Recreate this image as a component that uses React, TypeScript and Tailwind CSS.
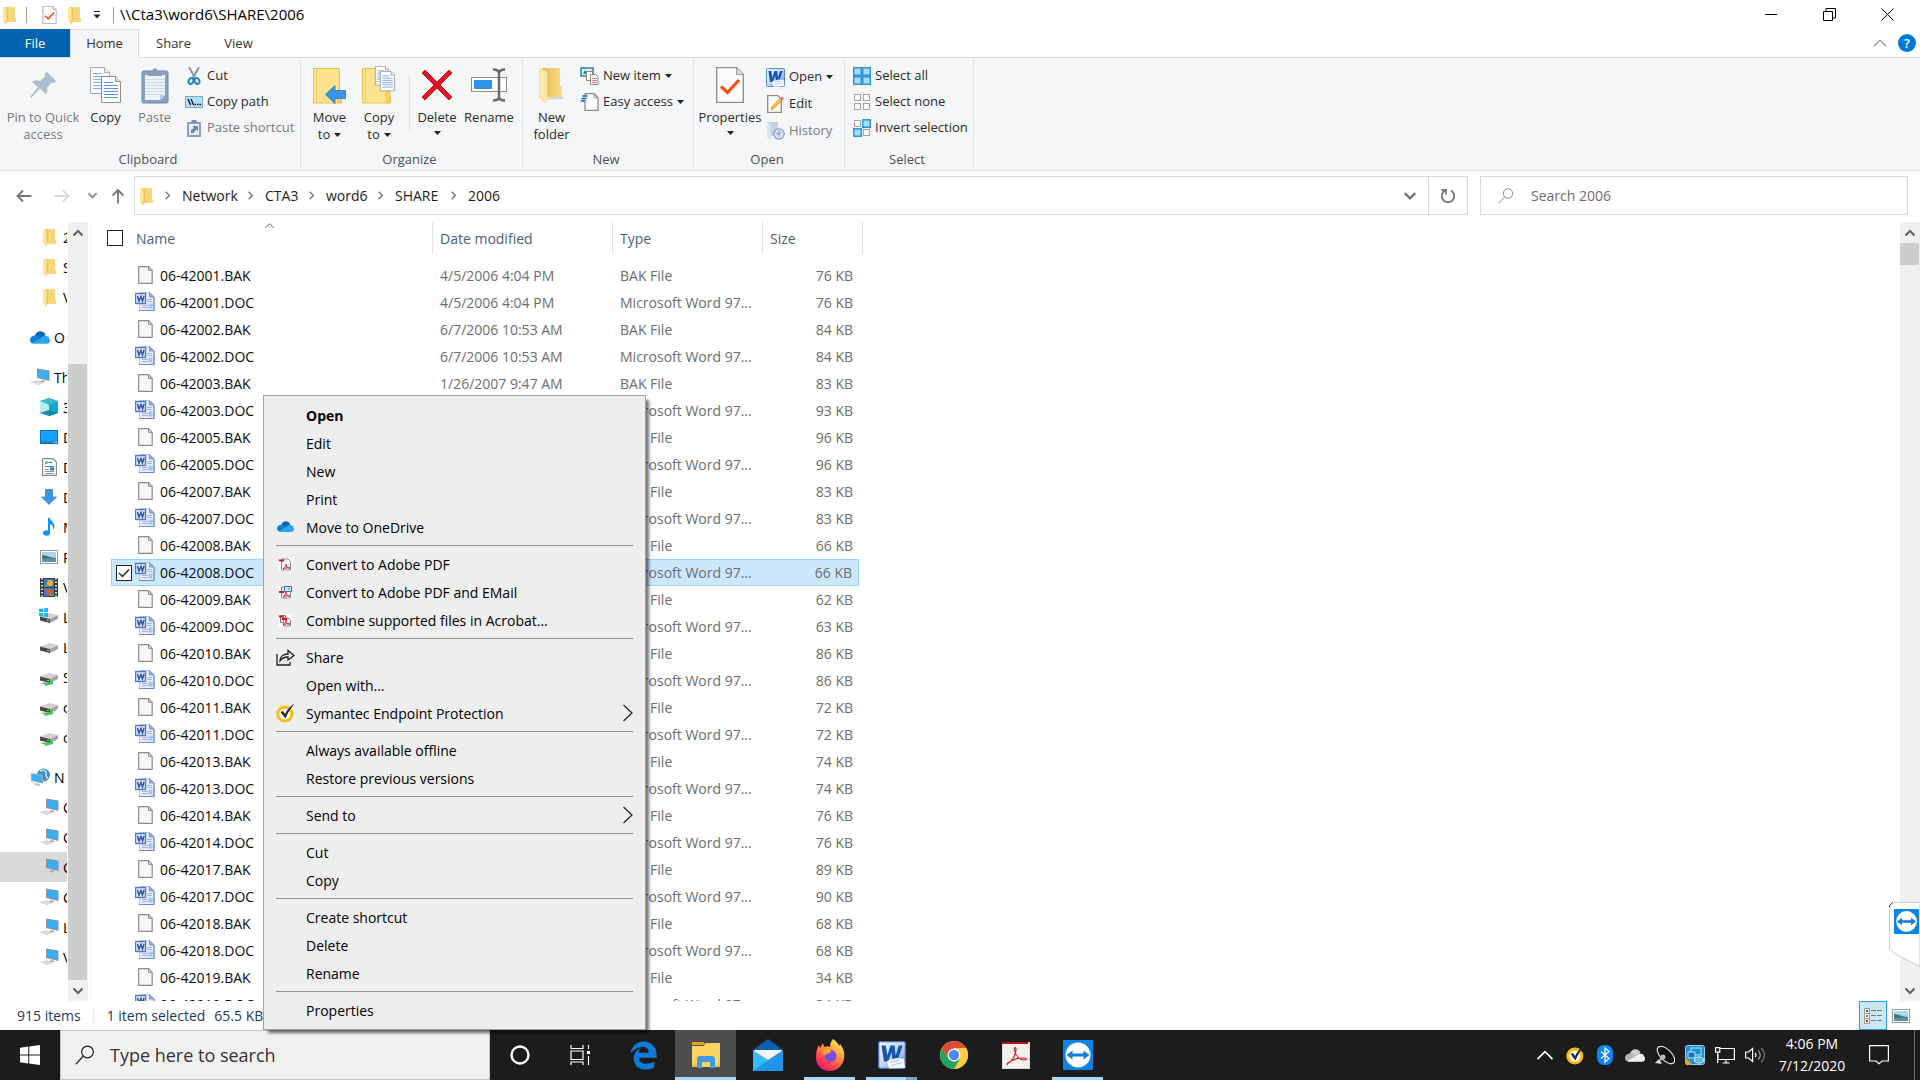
import React from "react";
import { FaEdgeLegacy } from "react-icons/fa";

/* ---------- small drawing helpers ---------- */

const Chevron = ({ dir, size = 12, color = "#606060", width = 2 }: { dir: "up" | "down" | "right"; size?: number; color?: string; width?: number }) => {
  const d = { up: "M1.5 8.5 6 4l4.500 4.500", down: "M1.500 3.500 6 8l4.500-4.500", right: "M4 2l4 4-4 4" }[dir];
  return (
    <svg width={size} height={size} viewBox="0 0 12 12" fill="none" stroke={color} strokeWidth={width} className="shrink-0">
      <path d={d} />
    </svg>
  );
};

const Caret = () => (
  <svg width="7" height="4" viewBox="0 0 7 4" className="shrink-0">
    <path d="M0 0h7L3.500 4z" fill="#222" />
  </svg>
);

const Folder = () => (
  <svg width="13" height="18" viewBox="0 0 13 18" className="shrink-0">
    <path d="M2 1h10v11l1 1v3H2z" fill="#f2cb62" />
    <path d="M5 1h7v11l1 1v3H5z" fill="#f9d678" />
    <path d="M0 1l4 2v12l-1 3-3-2z" fill="#ffe59a" />
    <path d="M4 3v12l-1 3" fill="none" stroke="#e4b94a" strokeWidth=".7" />
  </svg>
);

const BigFolder = () => (
  <svg width="26" height="36" viewBox="0 0 26 36">
    <defs>
      <linearGradient id="bf" x1="0" x2="1"><stop offset="0" stopColor="#e3bd58" /><stop offset="1" stopColor="#fcdd84" /></linearGradient>
    </defs>
    <path d="M4 33l20-1 2-2H10z" fill="#d9d9d9" />
    <path d="M3 1h18v17l2 2v10H3z" fill="url(#bf)" />
    <path d="M0 1l8 4v26l-1 5-7-5z" fill="#ffe9a9" stroke="#efd07a" strokeWidth=".5" />
  </svg>
);

const SheetLines = ({ x, y }: { x: number; y: number }) => (
  <g transform={`translate(${x} ${y})`}>
    <path d="M.5.5h14l5 5v21H.5z" fill="#fff" stroke="#8f8f8f" />
    <path d="M14.500.5v5h5" fill="#e9e9e9" stroke="#8f8f8f" />
    <path d="M3 6.500h9M3 9.500h14M3 12.500h14M3 15.500h14M3 18.500h14M3 21.500h14" stroke="#5f97ea" />
  </g>
);

const CopyIcon = () => (
  <svg width="32" height="37" viewBox="0 0 32 37">
    <g opacity=".75"><SheetLines x={0} y={0} /></g>
    <SheetLines x={11} y={9} />
  </svg>
);

const PinIcon = () => (
  <svg width="28" height="28" viewBox="0 0 28 28">
    <path d="M18 1l9 9-2 2-2-.5-5 5c1 3 0 5-1 7l-6-6L2 27l-1-1 8-10-6-5c2-2 5-2 8-1l5-5-.5-2z" fill="#aebccf" />
  </svg>
);

const PasteIcon = () => (
  <svg width="28" height="37" viewBox="0 0 28 37">
    <rect x="1" y="4" width="26" height="32" rx="1.500" fill="#8ba0c4" stroke="#7085ab" />
    <path d="M4 8h20v20l-5 5H4z" fill="#eef2f9" />
    <path d="M4 12.500h20M4 15.500h20M4 18.500h20M4 21.500h20M4 24.500h20M4 27.500h18" stroke="#d0d9e8" />
    <path d="M24 28h-5v5z" fill="#bccbe3" />
    <path d="M7 9V6l4-1c0-5 6-5 6 0l4 1v3z" fill="#8d9db8" />
  </svg>
);

const CutIcon = () => (
  <svg width="18" height="18" viewBox="0 0 18 18" fill="none">
    <path d="M4 0l6 11M14 0L8 11" stroke="#8e979e" strokeWidth="2" />
    <ellipse cx="6" cy="14" rx="2.300" ry="3" stroke="#1f86bf" strokeWidth="2" transform="rotate(25 6 14)" />
    <ellipse cx="12" cy="14" rx="2.300" ry="3" stroke="#1f86bf" strokeWidth="2" transform="rotate(-25 12 14)" />
  </svg>
);

const CopyPathIcon = () => (
  <svg width="18" height="12" viewBox="0 0 18 12">
    <rect x=".5" y=".5" width="17" height="11" fill="#b5defb" stroke="#7fa9c6" />
    <path d="M3 3l2.500 6M6 3l2.500 6" stroke="#111" strokeWidth="1.300" />
    <path d="M9.500 8.500h1.500M12 8.500h1.500M14.500 8.500H16" stroke="#111" strokeWidth="1.500" />
  </svg>
);

const PasteShortcutIcon = () => (
  <svg width="16" height="18" viewBox="0 0 16 18">
    <rect x="1" y="3" width="14" height="15" fill="#8da2c7" />
    <path d="M5 3l1-2h4l1 2v1H5z" fill="#7a8fb5" />
    <rect x="3" y="5" width="10" height="11" fill="#e9eef6" />
    <path d="M5 14V11l3-2-1.500-2H12v5l-1.500-1.500L7 14z" fill="#7084a8" />
  </svg>
);

const FlatFolder = () => (
  <>
    <path d="M.5 2.500h26V30l2 1v6H.5z" fill="#fde38e" stroke="#e8bf4b" />
    <path d="M3.500 3v34" stroke="#f2cd66" />
    <path d="M24 27c0-3 4-3 4-1v10h-3z" fill="#fbd567" stroke="#e8bf4b" />
  </>
);

const MoveToIcon = () => (
  <svg width="33" height="38" viewBox="0 0 33 38">
    <FlatFolder />
    <path d="M12.500 28.500L22 19.500v5h10.500v8H22v5z" fill="#3a96e4" stroke="#2778c0" strokeWidth=".8" />
  </svg>
);

const CopyToIcon = () => (
  <svg width="34" height="38" viewBox="0 0 34 38">
    <FlatFolder />
    <g transform="translate(13 0) scale(.72)"><SheetLines x={0} y={0} /></g>
    <g transform="translate(18 5) scale(.75)"><SheetLines x={0} y={0} /></g>
  </svg>
);

const DeleteIcon = () => (
  <svg width="32" height="32" viewBox="0 0 32 32">
    <path d="M1 4l3-3 12 12L28 1l3 3-12 12 12 12-3 3-12-12L4 31l-3-3 12-12z" fill="#e81123" stroke="#a80d1a" strokeWidth=".8" />
  </svg>
);

const RenameIcon = () => (
  <svg width="37" height="34" viewBox="0 0 37 34" fill="none">
    <rect x=".5" y="9.500" width="35" height="14" fill="#fff" stroke="#8c8c8c" />
    <rect x="3" y="12" width="18" height="9" fill="#2f93e8" />
    <path d="M22 1.500c4 0 6 1 6 4v23c0 3-2 4-6 4M34 1.500c-4 0-6 1-6 4v23c0 3 2 4 6 4" stroke="#6b6b6b" strokeWidth="2.500" />
  </svg>
);

const NewItemIcon = () => (
  <svg width="19" height="18" viewBox="0 0 19 18">
    <rect x="1" y="1" width="12" height="8" fill="#d9f0fb" stroke="#2d7fae" strokeWidth="1.500" />
    <path d="M3 7l2-4 3 4z" fill="#3a8a5d" />
    <path d="M6.500 4.500h6v9h-6z" fill="#fff" stroke="#888" />
    <path d="M10.500 7.500h5l2.500 2.500v7.500h-7.500z" fill="#fff" stroke="#888" />
    <path d="M12 11.500h5M12 13.500h5M12 15.500h5" stroke="#d7837e" />
  </svg>
);

const EasyAccessIcon = () => (
  <svg width="18" height="18" viewBox="0 0 18 18">
    <path d="M4 .7h9l4 4v12.600H4z" fill="#fff" stroke="#8a8a8a" strokeWidth="1.300" />
    <path d="M13 .7v4h4" fill="none" stroke="#8a8a8a" />
    <rect x="0" y="2" width="4.700" height="7" fill="#f5f6f7" />
    <path d="M1.500 3h5M.5 5.500h5M0 8h4.500" stroke="#12609e" strokeWidth="1.400" />
  </svg>
);

const PropertiesIcon = ({ w = 28, h = 36 }: { w?: number; h?: number }) => (
  <svg width={w} height={h} viewBox="0 0 28 36">
    <path d="M.7.7h20l6.600 6.600v28H.7z" fill="#fcfcfc" stroke="#8a8a8a" strokeWidth="1.300" />
    <path d="M20.700.7v6.600h6.600" fill="#e6e6e6" stroke="#8a8a8a" />
    <path d="M5 19.500l6.500 6L23 13" fill="none" stroke="#f2500f" strokeWidth="3.200" />
  </svg>
);

const WordIcon = ({ size = 19 }: { size?: number }) => (
  <svg width={size} height={size} viewBox="0 0 28 28">
    <defs>
      <linearGradient id="wd" x1="0" x2="1" y2="1"><stop offset="0" stopColor="#f3f8fe" /><stop offset=".5" stopColor="#c4d9f5" /><stop offset="1" stopColor="#5f8dd3" /></linearGradient>
    </defs>
    <rect x=".7" y=".7" width="26.600" height="26.600" rx="1.500" fill="url(#wd)" stroke="#4272bd" strokeWidth="1.200" />
    <path d="M3.500 4.500h4.300l1.500 10L12.500 4.500h4l1.200 10 3-10h4L19 20.500h-4.200l-1.300-9-3.300 9H6z" fill="#1655b0" />
    <path d="M9 20l9-3 8 1 1 9-16 .5z" fill="#fff" opacity=".92" />
    <path d="M12 21.500l10-2.500M13 24.500l11-3" stroke="#a9c4ea" />
  </svg>
);

const EditIcon = () => (
  <svg width="17" height="18" viewBox="0 0 17 18">
    <path d="M.7.7h10l3.600 3.600v13H.7z" fill="#fff" stroke="#8a8a8a" strokeWidth="1.300" />
    <path d="M4 15l1-3.500L13.500 3l2 2L7 13.500z" fill="#f6b92f" stroke="#c98a12" strokeWidth=".6" />
    <path d="M13 3.500L15 1.500l2 2-2 2z" fill="#e06b7c" />
  </svg>
);

const HistoryIcon = () => (
  <svg width="18" height="18" viewBox="0 0 18 18">
    <path d="M0 0h11v14H4l-1 3-3-2z" fill="#c4d0e4" />
    <path d="M0 0l4 2v12l-1 3-3-2z" fill="#dbe3f0" />
    <circle cx="12" cy="12" r="5.200" fill="#dde5f1" stroke="#8ba0c2" strokeWidth="1.300" />
    <path d="M12 8.500V12l2.500-2M9 12h3v3" fill="none" stroke="#7c90b3" />
  </svg>
);

const SelectIcon = ({ on }: { on: boolean[] }) => (
  <svg width="18" height="18" viewBox="0 0 18 18">
    {on.map((v, i) => {
      const x = i % 2 ? 10 : 1;
      const y = i > 1 ? 10 : 1;
      return v ? (
        <rect key={i} x={x - 0.2} y={y - 0.2} width="7.500" height="7.500" fill="#a6dbfb" stroke="#2c93e0" strokeWidth="1.500" />
      ) : (
        <rect key={i} x={x + 0.5} y={y + 0.5} width="6" height="6" fill="#fcfcfc" stroke="#a5a5a5" />
      );
    })}
  </svg>
);

const BakIcon = () => (
  <svg width="15" height="18" viewBox="0 0 15 18" className="shrink-0">
    <path d="M.7.7h9.800l3.700 3.700v12.900H.7z" fill="#f8f8f8" stroke="#8b8b8b" strokeWidth="1.200" />
    <path d="M10.500.7v3.700h3.700" fill="none" stroke="#8b8b8b" />
  </svg>
);

const DocIcon = () => (
  <svg width="20" height="20" viewBox="0 0 20 20" className="shrink-0">
    <path d="M4.500.5h10l4.500 4v14H4.500z" fill="#e6eefc" stroke="#b4c6e8" />
    <path d="M4 18.500h15V5" fill="none" stroke="#6d8dc8" strokeWidth="1.200" />
    <path d="M14.500.5v4.500H19z" fill="#8fabdd" stroke="#7d9bd0" />
    <path d="M12 7.500h5M12 9.500h5M7 13.500h6M7 15.500h6" stroke="#9fb7e3" />
    <rect x="13.500" y="11.500" width="4" height="5" fill="#a9c4ef" />
    <rect x=".5" y="1.500" width="10" height="10" fill="#dbe6fa" stroke="#5579c4" strokeWidth="1.400" />
    <path d="M2.500 4l1.500 5L6 4.500 7.500 9l1.500-5" fill="none" stroke="#2f55a8" strokeWidth="1.500" />
  </svg>
);

const CloudIcon = ({ w = 20, grey = false }: { w?: number; grey?: boolean }) => (
  <svg width={w} height={(w * 13) / 20} viewBox="0 0 20 13" className="shrink-0">
    <path d="M5 5C6-1 14-1 15.500 4L9 9z" fill={grey ? "#cfcfcf" : "#0a64b8"} />
    <path d="M3.500 12.500C-1.500 12-1 5 4.500 4.500c2-.5 4 .5 5 1.500L14 9z" fill={grey ? "#b5b5b5" : "#1280d8"} />
    <path d="M2.500 12L12 6.500c2-3 7-2 7.500 1.500 1.200 2 0 4.800-2.500 4.800H4z" fill={grey ? "#f2f2f2" : "#28a8ea"} />
  </svg>
);

const PcIcon = () => (
  <svg width="20" height="18" viewBox="0 0 20 18" className="shrink-0">
    <path d="M7 .5l12.500 2V13L7 10z" fill="#8b959e" />
    <path d="M8 1.700l10.700 1.600v8.200L8 9z" fill="#36aef5" />
    <path d="M12 12l3 .7v1.500l-5-.5z" fill="#a4aab0" />
    <path d="M0 14l8-1.500 6 2.500-6 2z" fill="#c3c9ce" />
    <path d="M2 14.300l8 1.700M5 13.500l7 1.800" stroke="#eff1f3" strokeWidth=".7" />
  </svg>
);

const CubeIcon = () => (
  <svg width="18" height="18" viewBox="0 0 18 18">
    <path d="M9 0l9 3v12l-9 3-9-3V3z" fill="#5fd0da" />
    <path d="M9 0l9 3-9 4-9-4z" fill="#37b8c8" />
    <path d="M9 7v11l9-3V3z" fill="#12a9cc" />
    <path d="M9 7v5l-9 3V3z" fill="#b9eef0" />
    <path d="M9 12l9 3-9 3-9-3z" fill="#0c7f97" opacity=".8" />
  </svg>
);
const DesktopIcon = () => (
  <svg width="18" height="14" viewBox="0 0 18 14"><rect x=".5" y=".5" width="17" height="13" fill="#18a0fb" stroke="#0a6fb8" /><path d="M1 12h13" stroke="#0a6fb8" /><path d="M14 12.500h3" stroke="#fff" strokeDasharray="1 1" /></svg>
);
const DocumentsIcon = () => (
  <svg width="15" height="18" viewBox="0 0 15 18"><path d="M.6.6h10.400l3.400 3.400v13.400H.6z" fill="#fff" stroke="#8b8b8b" strokeWidth="1.200" /><path d="M3 6.500L5 3v3M6.500 4.500h4M3 8.500h9" stroke="#1e8bd0" fill="none" /><path d="M3 11.500h4M3 13.500h9M3 15.500h9" stroke="#999" /><rect x="8" y="9.500" width="4" height="3" fill="#2f7fb8" /></svg>
);
const DownloadIcon = () => (
  <svg width="16" height="16" viewBox="0 0 16 16"><path d="M4.500.5h7V8h4L8 15.500.5 8h4z" fill="#3c97e6" stroke="#2a79c0" strokeWidth=".7" /></svg>
);
const MusicIcon = () => (
  <svg width="12" height="18" viewBox="0 0 12 18"><ellipse cx="3.500" cy="15" rx="3.500" ry="2.800" fill="#0e97f5" /><path d="M5 0h2c0 3 5 4 4.500 9-.3 1-.6 1.500-1.500 2 .5-3-1-4.500-3-5v9H5z" fill="#0e97f5" /></svg>
);
const PictureIcon = () => (
  <svg width="18" height="14" viewBox="0 0 18 14">
    <rect x=".5" y=".5" width="17" height="13" fill="#fff" stroke="#999" />
    <rect x="2" y="2" width="14" height="10" fill="#a9d6f5" />
    <path d="M2 5c5 0 8 3 14 3v1H2z" fill="#3f7a55" /><path d="M2 8.500h14V12H2z" fill="#5d8fae" />
  </svg>
);
const VideoIcon = () => (
  <svg width="18" height="19" viewBox="0 0 18 19">
    <rect width="18" height="19" fill="#3a3a3a" /><path d="M2 0v19M16 0v19" stroke="#ddd" strokeWidth="2" strokeDasharray="1.500 2" />
    <rect x="4" y="1" width="10" height="8" fill="#3c78d8" /><rect x="4" y="10" width="10" height="8" fill="#3c78d8" />
    <circle cx="10" cy="5" r="3" fill="#e7b32f" /><circle cx="9" cy="13.500" r="3" fill="#dd5a2b" /><path d="M4 7h5v2H4zM9 16h5v2H9z" fill="#5fa055" />
  </svg>
);
const DriveIcon = ({ kind = "plain" }: { kind?: "plain" | "win" | "net" }) => (
  <svg width="20" height="18" viewBox="0 0 20 18">
    <path d="M1 8.500L10 5l9 2-8 4z" fill="#d2d2d2" />
    <path d="M1 8.500l10 2.500v4L1 12.500z" fill="#4a4a4a" />
    <path d="M11 11l8-4v4l-8 4z" fill="#a3a3a3" />
    <path d="M8 12.500h2" stroke="#6fe06f" />
    {kind === "win" && <path d="M0 1l4-.5V4H0zM5 .3L9 0v4H5zM0 5h4v3.500L0 8zM5 5h4v4l-4-.4z" fill="#12b6ee" />}
    {kind === "net" && <path d="M1 15l10-1v-2l3 1v3l-8 2v-1.500z" fill="#46c15c" />}
  </svg>
);
const NetworkIcon = () => (
  <svg width="19" height="19" viewBox="0 0 19 19">
    <circle cx="12.500" cy="7" r="6.500" fill="#3f8fc0" /><path d="M9 3c4-2 7 0 6 3s2 3 2 5" stroke="#bfe2f5" fill="none" strokeWidth="1.500" />
    <path d="M0 5l12 2v8.500L0 13z" fill="#9ab" /><path d="M1 6.200l10 1.700v6.300L1 12z" fill="#36aef5" /><path d="M4 15l6 1.500-2 1.500-5-1.500z" fill="#b5bac0" />
  </svg>
);

const PdfIcon = ({ kind }: { kind: "one" | "mail" | "many" }) => (
  <svg width="13" height="13" viewBox="0 0 13 13">
    <rect width="13" height="13" fill="#fff" />
    {kind === "many" && <path d="M1.500 1.500h5v7h-5z" fill="#eee" stroke="#777" />}
    <path d={kind === "many" ? "M4.500 4h4.500l2.500 2v6h-7z" : "M2.500 1h6.500l2.500 2.500v8.500h-9z"} fill="#f8f8f8" stroke="#888" />
    <path d="M4 11c2-1 3-3.500 3-5 0 2.500 1.500 4.500 4 4-2.500-.5-5 0-7 1z" fill="none" stroke="#e0202b" />
    <rect x="0" y={kind === "mail" ? 5 : 1.5} width="5" height="2" fill="#e60f1c" />
    {kind === "mail" && <path d="M5.500.5h7v5h-7z M8 2.500l1 1 2-1" fill="#e9f3fc" stroke="#2f6fb5" />}
    {kind === "many" && <rect x="3" y="4" width="5" height="2" fill="#e60f1c" />}
  </svg>
);

const ShareIcon = () => (
  <svg width="19" height="17" viewBox="0 0 19 17" fill="none" stroke="#222" strokeWidth="1.300">
    <path d="M1 5v11h13v-3" /><path d="M4 12c0-4 3-7 8-7V1.500L18 6.500 12 11V8C8 8 6 9 4 12z" />
  </svg>
);

const SymantecIcon = () => (
  <svg width="19" height="20" viewBox="0 0 19 20">
    <circle cx="8.800" cy="11" r="7" fill="#fff" stroke="#fdbb13" strokeWidth="3" />
    <path d="M4.500 9l2.500-1 2 3C11 7 14 3 18.500.5 15 5 11.500 10 9.500 15.500z" fill="#26282a" />
  </svg>
);

const TeamViewerIcon = ({ size }: { size: number }) => (
  <svg width={size} height={size} viewBox="0 0 30 30">
    <rect width="30" height="30" rx="1" fill="#0d83e6" />
    <circle cx="15" cy="15" r="12.500" fill="#fff" />
    <path d="M3.500 15l6-4.500v3h11v-3l6 4.500-6 4.500v-3h-11v3z" fill="#0f7fdf" />
  </svg>
);

const SearchGlyph = ({ size, color }: { size: number; color: string }) => (
  <svg width={size} height={size} viewBox="0 0 16 16" fill="none" stroke={color} className="shrink-0">
    <circle cx="10" cy="5.500" r="4.700" /><path d="M6.500 9L.7 15.300" />
  </svg>
);

/* ---------- ribbon ---------- */

const BigButton = ({ icon, lines, width, disabled, caret }: { icon: React.ReactNode; lines: string[]; width: string; disabled?: boolean; caret?: "inline" | "below" }) => (
  <button className={`flex flex-col items-center text-center text-[13px] leading-[17px] ${width} ${disabled ? "text-[#7a7a7a]" : "text-[#2b2b2b]"}`}>
    <span className="mb-0.5 flex h-[44px] items-center justify-center">{icon}</span>
    {lines.map((l, i) => (
      <span key={l} className="flex items-center gap-1 whitespace-nowrap">
        {l}
        {caret === "inline" && i === lines.length - 1 && <Caret />}
      </span>
    ))}
    {caret === "below" && <span className="flex h-[13px] items-center"><Caret /></span>}
  </button>
);

const SmallButton = ({ icon, label, disabled, caret }: { icon: React.ReactNode; label: string; disabled?: boolean; caret?: boolean }) => (
  <button className={`flex h-[26px] items-center gap-1 text-[13px] whitespace-nowrap ${disabled ? "text-[#7a7a7a]" : "text-[#2b2b2b]"}`}>
    <span className="flex w-[19px] items-center justify-center">{icon}</span>
    {label}
    {caret && <Caret />}
  </button>
);

const Group = ({ title, width, children }: { title: string; width: string; children: React.ReactNode }) => (
  <section aria-label={title} className={`my-0.5 flex flex-col border-r border-[#e0e1e3] ${width}`}>
    <div className="flex flex-1 pt-[3px]">{children}</div>
    <div className="h-[18px] pr-1 text-center text-[13px] leading-[18px] text-[#505050]">{title}</div>
  </section>
);

const Ribbon = () => (
  <div className="flex h-[114px] shrink-0 border-y border-[#dadbdc] bg-[#f5f6f7]">
    <Group title="Clipboard" width="w-[301px]">
      <BigButton icon={<PinIcon />} lines={["Pin to Quick", "access"]} width="w-[86px]" disabled />
      <BigButton icon={<CopyIcon />} lines={["Copy"]} width="w-[39px]" />
      <BigButton icon={<PasteIcon />} lines={["Paste"]} width="w-[59px]" disabled />
      <div className="flex flex-col">
        <SmallButton icon={<CutIcon />} label="Cut" />
        <SmallButton icon={<CopyPathIcon />} label="Copy path" />
        <SmallButton icon={<PasteShortcutIcon />} label="Paste shortcut" disabled />
      </div>
    </Group>
    <Group title="Organize" width="w-[222px]">
      <BigButton icon={<MoveToIcon />} lines={["Move", "to"]} width="w-[57px]" caret="inline" />
      <BigButton icon={<CopyToIcon />} lines={["Copy", "to"]} width="w-[42px]" caret="inline" />
      <div className="mt-3 ml-[9px] h-[56px] w-px bg-[#dfe0e2]" />
      <BigButton icon={<DeleteIcon />} lines={["Delete"]} width="w-[54px]" caret="below" />
      <BigButton icon={<RenameIcon />} lines={["Rename"]} width="w-[50px]" />
    </Group>
    <Group title="New" width="w-[171px]">
      <BigButton icon={<BigFolder />} lines={["New", "folder"]} width="w-[57px]" />
      <div className="flex flex-col">
        <SmallButton icon={<NewItemIcon />} label="New item" caret />
        <SmallButton icon={<EasyAccessIcon />} label="Easy access" caret />
      </div>
    </Group>
    <Group title="Open" width="w-[151px]">
      <BigButton icon={<PropertiesIcon />} lines={["Properties"]} width="w-[72px]" caret="below" />
      <div className="flex flex-col gap-px pt-px">
        <SmallButton icon={<WordIcon />} label="Open" caret />
        <SmallButton icon={<EditIcon />} label="Edit" />
        <SmallButton icon={<HistoryIcon />} label="History" disabled />
      </div>
    </Group>
    <Group title="Select" width="w-[129px]">
      <div className="flex flex-col pl-[7px]">
        <SmallButton icon={<SelectIcon on={[true, true, true, true]} />} label="Select all" />
        <SmallButton icon={<SelectIcon on={[false, false, false, false]} />} label="Select none" />
        <SmallButton icon={<SelectIcon on={[false, true, true, false]} />} label="Invert selection" />
      </div>
    </Group>
  </div>
);

/* ---------- title, tabs, address ---------- */

const TitleBar = () => (
  <header className="flex h-[29px] shrink-0 items-center">
    <div className="flex flex-1 items-center">
      <span className="ml-[3px]"><Folder /></span>
      <span className="ml-2.5 h-4 w-px bg-[#9a9a9a]" />
      <button aria-label="Properties" className="ml-[15px]"><PropertiesIcon w={15} h={18} /></button>
      <button aria-label="New folder" className="ml-[11px]"><Folder /></button>
      <button aria-label="Customize Quick Access Toolbar" className="ml-3">
        <svg width="8" height="8" viewBox="0 0 8 8"><path d="M1 .5h6" stroke="#222" /><path d="M.5 3.500h7L4 7.500z" fill="#222" /></svg>
      </button>
      <span className="ml-3 h-4 w-px bg-[#9a9a9a]" />
      <h1 className="ml-1.5 text-[15px] text-black">{"\\\\Cta3\\word6\\SHARE\\2006"}</h1>
    </div>
    <div className="flex pr-1">
      <button aria-label="Minimize" className="flex w-[58px] justify-center">
        <svg width="13" height="13" viewBox="0 0 13 13"><path d="M0 6.500h12" stroke="#000" /></svg>
      </button>
      <button aria-label="Restore" className="flex w-[58px] justify-center">
        <svg width="13" height="13" viewBox="0 0 13 13" fill="none" stroke="#000"><path d="M.5 3.500h9v9h-9zM3 3V.5h9.500V10H10" /></svg>
      </button>
      <button aria-label="Close" className="flex w-[58px] justify-center">
        <svg width="13" height="13" viewBox="0 0 13 13" stroke="#000"><path d="M.5.5l12 12M12.500.5l-12 12" /></svg>
      </button>
    </div>
  </header>
);

const Tabs = () => (
  <div role="tablist" className="flex h-[28px] shrink-0 text-[13px] text-[#333]">
    <button role="tab" className="w-[70px] bg-[#0063b1] pt-px text-white">File</button>
    <button role="tab" aria-selected="true" className="z-10 -mb-px w-[69px] border border-b-0 border-[#dadbdc] bg-[#f5f6f7]">Home</button>
    <button role="tab" className="w-[69px] pt-px">Share</button>
    <button role="tab" className="w-[61px] pt-px">View</button>
    <div className="flex flex-1 items-center justify-end gap-[10px] pr-1">
      <button aria-label="Minimize the Ribbon"><Chevron dir="up" size={16} color="#9b9b9b" width={1} /></button>
      <button aria-label="Help" className="size-[18px] rounded-full bg-[#0078d7] text-[13px] leading-[18px] font-semibold text-white">?</button>
    </div>
  </div>
);

const ArrowIcon = ({ d, color }: { d: string; color: string }) => (
  <svg width="16" height="16" viewBox="0 0 16 16" fill="none" stroke={color} strokeWidth="1.800"><path d={d} /></svg>
);

const AddressBar = () => (
  <div className="flex h-[51px] shrink-0 items-start pt-[5px]">
    <div className="flex h-[39px] w-[134px] items-center pl-4">
      <button aria-label="Back"><ArrowIcon d="M15.500 8H1.500M7 2.500L1.500 8 7 13.500" color="#757575" /></button>
      <button aria-label="Forward" className="ml-[22px]"><ArrowIcon d="M.5 8h14M9 2.500L14.500 8 9 13.500" color="#dadada" /></button>
      <button aria-label="Recent locations" className="ml-[17px]"><Chevron dir="down" size={11} color="#8a8a8a" /></button>
      <button aria-label="Up" className="ml-3"><ArrowIcon d="M8 15.500V2M2.500 7.500L8 2l5.500 5.500" color="#757575" /></button>
    </div>
    <div className="flex h-[39px] flex-1 border border-[#d9d9d9]">
      <nav aria-label="Address" className="flex flex-1 items-center pl-[5px] text-[14px] text-[#1b1b1b]">
        <span className="mr-1"><Folder /></span>
        {[["Network", "w-[83px]"], ["CTA3", "w-[61px]"], ["word6", "w-[69px]"], ["SHARE", "w-[73px]"], ["2006", "w-[60px]"]].map(([n, w]) => (
          <span key={n} className={`flex items-center ${w}`}>
            <span className="mx-[5px] flex"><Chevron dir="right" size={11} color="#757575" width={1.5} /></span>
            <button className="pl-1">{n}</button>
          </span>
        ))}
      </nav>
      <button aria-label="Previous locations" className="mr-[11px] flex items-center"><Chevron dir="down" size={14} color="#757575" /></button>
      <button aria-label="Refresh" className="flex w-[39px] items-center justify-center border-l border-[#d9d9d9]">
        <svg width="16" height="16" viewBox="0 0 16 16" fill="none" stroke="#757575" strokeWidth="1.800"><path d="M5 2.500A6.200 6.200 0 1 0 11 2.500" /><path d="M1.500 2H6v4.500" /></svg>
      </button>
    </div>
    <label className="mr-3 ml-3 flex h-[39px] w-[428px] items-center border border-[#d9d9d9] pl-[17px]">
      <SearchGlyph size={16} color="#8a8a8a" />
      <input aria-label="Search 2006" placeholder="Search 2006" className="ml-[17px] w-full bg-transparent text-[14px] outline-none placeholder:text-[#6d6d6d]" />
    </label>
  </div>
);

/* ---------- navigation pane ---------- */

type NavItem = { t: string; icon: React.ReactNode; root?: boolean; gap?: boolean; sel?: boolean };
const NAV: NavItem[] = [
  { t: "2", icon: <Folder /> },
  { t: "S", icon: <Folder /> },
  { t: "V", icon: <Folder /> },
  { t: "O", icon: <CloudIcon />, root: true, gap: true },
  { t: "Th", icon: <PcIcon />, root: true, gap: true },
  { t: "3", icon: <CubeIcon /> },
  { t: "D", icon: <DesktopIcon /> },
  { t: "D", icon: <DocumentsIcon /> },
  { t: "D", icon: <DownloadIcon /> },
  { t: "M", icon: <MusicIcon /> },
  { t: "P", icon: <PictureIcon /> },
  { t: "V", icon: <VideoIcon /> },
  { t: "L", icon: <DriveIcon kind="win" /> },
  { t: "L", icon: <DriveIcon /> },
  { t: "S", icon: <DriveIcon kind="net" /> },
  { t: "c", icon: <DriveIcon kind="net" /> },
  { t: "c", icon: <DriveIcon kind="net" /> },
  { t: "N", icon: <NetworkIcon />, root: true, gap: true },
  { t: "C", icon: <PcIcon /> },
  { t: "C", icon: <PcIcon /> },
  { t: "C", icon: <PcIcon />, sel: true },
  { t: "C", icon: <PcIcon /> },
  { t: "L", icon: <PcIcon /> },
  { t: "V", icon: <PcIcon /> },
];

const NavPane = () => (
  <div className="flex w-[91px] shrink-0 border-r border-[#f3f3f3]">
    <nav aria-label="Folders" className="w-[67px] overflow-hidden">
      {NAV.map((n, i) => (
        <a key={i} href="#" className={`flex h-[30px] items-center text-[14px] text-black ${n.gap ? "mt-[10px]" : ""} ${n.sel ? "bg-[#d9d9d9]" : ""} ${n.root ? "pl-[29px]" : "pl-[38px]"}`}>
          <span className="flex w-[22px] shrink-0 justify-center">{n.icon}</span>
          <span className="ml-[3px]">{n.t}</span>
        </a>
      ))}
    </nav>
    <div className="ml-px flex w-5 flex-col bg-[#f0f0f0]">
      <button aria-label="Scroll up" className="mr-px flex h-[21px] items-center justify-center"><Chevron dir="up" /></button>
      <div className="flex-[121]" />
      <div className="mr-px flex-[616] bg-[#cdcdcd]" />
      <button aria-label="Scroll down" className="mr-px flex h-[21px] items-center justify-center"><Chevron dir="down" /></button>
    </div>
  </div>
);

/* ---------- file list ---------- */

const FILES: [string, string, string][] = [
  ["06-42001.BAK", "4/5/2006 4:04 PM", "76 KB"],
  ["06-42001.DOC", "4/5/2006 4:04 PM", "76 KB"],
  ["06-42002.BAK", "6/7/2006 10:53 AM", "84 KB"],
  ["06-42002.DOC", "6/7/2006 10:53 AM", "84 KB"],
  ["06-42003.BAK", "1/26/2007 9:47 AM", "83 KB"],
  ["06-42003.DOC", "", "93 KB"],
  ["06-42005.BAK", "", "96 KB"],
  ["06-42005.DOC", "", "96 KB"],
  ["06-42007.BAK", "", "83 KB"],
  ["06-42007.DOC", "", "83 KB"],
  ["06-42008.BAK", "", "66 KB"],
  ["06-42008.DOC", "", "66 KB"],
  ["06-42009.BAK", "", "62 KB"],
  ["06-42009.DOC", "", "63 KB"],
  ["06-42010.BAK", "", "86 KB"],
  ["06-42010.DOC", "", "86 KB"],
  ["06-42011.BAK", "", "72 KB"],
  ["06-42011.DOC", "", "72 KB"],
  ["06-42013.BAK", "", "74 KB"],
  ["06-42013.DOC", "", "74 KB"],
  ["06-42014.BAK", "", "76 KB"],
  ["06-42014.DOC", "", "76 KB"],
  ["06-42017.BAK", "", "89 KB"],
  ["06-42017.DOC", "", "90 KB"],
  ["06-42018.BAK", "", "68 KB"],
  ["06-42018.DOC", "", "68 KB"],
  ["06-42019.BAK", "", "34 KB"],
  ["06-42019.DOC", "", "34 KB"],
];

const SELECTED = "06-42008.DOC";

const FileList = () => (
  <div className="min-w-0 flex-1 overflow-hidden">
    <table className="ml-5 w-[752px] table-fixed border-separate border-spacing-0 text-[14px] whitespace-nowrap text-[#6d6d6d]">
      <colgroup>
        <col className="w-[322px]" /><col className="w-[180px]" /><col className="w-[150px]" /><col className="w-[96px]" /><col className="w-[4px]" />
      </colgroup>
      <thead>
        <tr className="h-8 text-left text-[#4c607a] [&>th]:font-normal">
          <th className="relative border-r border-[#e3e3e3]">
            <span className="-ml-1 flex items-center">
              <input type="checkbox" aria-label="Select all items" className="size-4 appearance-none border border-[#222] bg-white" />
              <span className="ml-[13px]">Name</span>
            </span>
            <span className="absolute -top-0.5 left-[153px]"><Chevron dir="up" size={11} color="#555" width={1} /></span>
          </th>
          <th className="border-r border-[#e3e3e3] pl-[7px]">Date modified</th>
          <th className="border-r border-[#e3e3e3] pl-[7px]">Type</th>
          <th className="pl-[7px]">Size</th>
          <th className="border-r border-[#e3e3e3]" />
        </tr>
      </thead>
      <tbody>
        <tr className="h-[8px]" aria-hidden="true"><td colSpan={5} /></tr>
        {FILES.map(([name, date, size]) => {
          const sel = name === SELECTED;
          const doc = name.endsWith("DOC");
          const cell = sel ? "border-y border-[#99d1ff] bg-[#cce8ff]" : "";
          return (
            <tr key={name} className="h-[27px]">
              <td className={`${cell} ${sel ? "border-l" : ""}`}>
                <span className="flex h-[25px] items-center text-[#0a0a0a]">
                  <span className={`flex shrink-0 items-center ${sel ? "w-[23px] pl-1" : "w-6"}`}>
                    {sel && (
                      <label className="relative flex">
                        <input type="checkbox" defaultChecked aria-label={name} className="size-4 appearance-none border border-[#222] bg-white" />
                        <svg width="16" height="16" viewBox="0 0 16 16" className="absolute inset-0" fill="none" stroke="#222" strokeWidth="1.300"><path d="M3 8l3.500 3.500L13 4.500" /></svg>
                      </label>
                    )}
                  </span>
                  <span className="mr-[5px] flex w-5 justify-center pb-0.5">{doc ? <DocIcon /> : <BakIcon />}</span>
                  {name}
                </span>
              </td>
              <td className={`pl-[7px] ${cell}`}>{date}</td>
              <td className={`pl-[7px] ${cell}`}>{doc ? "Microsoft Word 97..." : "BAK File"}</td>
              <td className={`pr-[6px] text-right ${cell} ${sel ? "border-r" : ""}`}>{size}</td>
            </tr>
          );
        })}
      </tbody>
    </table>
  </div>
);

const StatusBar = () => (
  <footer className="flex h-[29px] shrink-0 items-center pl-[17px] text-[14px] text-[#1e395b]">
    <span>915 items</span>
    <span className="ml-3 h-4 w-px bg-[#e9e9e9]" />
    <span className="ml-[13px]">1 item selected</span>
    <span className="ml-[9px]">65.5 KB</span>
    <span className="flex-1" />
    <button aria-label="Details view" className="flex h-[29px] w-7 items-center justify-center border border-[#26a0da] bg-[#cbe8f6]">
      <svg width="18" height="16" viewBox="0 0 18 16" fill="none">
        <path d="M.5.5h5v15h-5zM.5 5.500h5M.5 10.500h5" fill="#fff" stroke="#999" />
        <path d="M2 3h2" stroke="#2f6fb5" strokeWidth="2" /><path d="M2 8h2" stroke="#6b7f2c" strokeWidth="2" /><path d="M2 13h2" stroke="#c22" strokeWidth="2" />
        <path d="M7 2.500h5M13 2.500h5M7 7.500h5M13 7.500h5M7 12.500h5M13 12.500h5" stroke="#7a7a7a" />
      </svg>
    </button>
    <button aria-label="Large icons view" className="mr-2.5 ml-[5px]"><PictureIcon /></button>
  </footer>
);

/* ---------- context menu ---------- */

type MenuRow = { t: string; icon?: React.ReactNode; bold?: boolean; arrow?: boolean } | null;
const MENU: MenuRow[] = [
  { t: "Open", bold: true },
  { t: "Edit" },
  { t: "New" },
  { t: "Print" },
  { t: "Move to OneDrive", icon: <CloudIcon w={17} /> },
  null,
  { t: "Convert to Adobe PDF", icon: <PdfIcon kind="one" /> },
  { t: "Convert to Adobe PDF and EMail", icon: <PdfIcon kind="mail" /> },
  { t: "Combine supported files in Acrobat...", icon: <PdfIcon kind="many" /> },
  null,
  { t: "Share", icon: <ShareIcon /> },
  { t: "Open with..." },
  { t: "Symantec Endpoint Protection", icon: <SymantecIcon />, arrow: true },
  null,
  { t: "Always available offline" },
  { t: "Restore previous versions" },
  null,
  { t: "Send to", arrow: true },
  null,
  { t: "Cut" },
  { t: "Copy" },
  null,
  { t: "Create shortcut" },
  { t: "Delete" },
  { t: "Rename" },
  null,
  { t: "Properties" },
];

const ContextMenu = () => (
  <div role="menu" className="absolute top-[395px] left-[263px] z-20 w-[383px] border border-[#a0a0a0] bg-[#eeeeee] py-[5px] text-[14px] text-black shadow-[4px_4px_3px_-1px_rgba(0,0,0,0.55)]">
    {MENU.map((m, i) =>
      m ? (
        <button key={i} role="menuitem" className={`flex h-7 w-full items-center pr-3 text-left ${m.bold ? "font-bold" : ""}`}>
          <span className="mr-2 flex w-[34px] justify-end"><span className="flex w-[26px] justify-center">{m.icon}</span></span>
          <span className="flex-1">{m.t}</span>
          {m.arrow && (
            <svg width="10" height="18" viewBox="0 0 10 18" fill="none" stroke="#222" strokeWidth="1.200"><path d="M.5 1l8.500 8-8.500 8" /></svg>
          )}
        </button>
      ) : (
        <div key={i} role="separator" className="mx-3 my-1 h-px bg-[#919191]" />
      )
    )}
  </div>
);

/* ---------- taskbar ---------- */

const ExplorerIcon = () => (
  <svg width="28" height="26" viewBox="0 0 28 26">
    <path d="M0 0h12l2 3H0z" fill="#e3a410" /><path d="M0 4h12l2-3h14v24H0z" fill="#fcd462" />
    <path d="M5 26V16l2-2h14l2 2v10h-5v-6h-8v6z" fill="#3f9ade" /><path d="M0 23h5v2H0zM23 23h5v2h-5z" fill="#f3b92f" />
  </svg>
);
const MailIcon = () => (
  <svg width="30" height="32" viewBox="0 0 30 32">
    <path d="M0 11L15 0l15 11v3H0z" fill="#0c5fae" />
    <path d="M0 11l15 10L30 11v21H0z" fill="#33bdf2" /><path d="M0 32L30 11v21z" fill="#1e95e8" />
    <path d="M2 11h26l1 1-14 9L1 12z" fill="#f4f4f4" />
  </svg>
);
const FirefoxIcon = () => (
  <svg width="30" height="32" viewBox="0 0 30 32">
    <defs>
      <linearGradient id="ff" x1=".8" y1="0" x2=".2" y2="1"><stop offset="0" stopColor="#fff44f" /><stop offset=".4" stopColor="#ff9640" /><stop offset=".75" stopColor="#ff3b4e" /><stop offset="1" stopColor="#e31587" /></linearGradient>
    </defs>
    <path d="M18 0c3 2 5 4 6 7l1-2c4 5 5 10 4 15-2 8-8 12-14 12C7 32 1 27 1 18c0-5 1-9 3-12l1 3 3-5 1 4c2-1 4-1 6 0 0-3 1-6 3-8z" fill="url(#ff)" />
    <circle cx="15.500" cy="17" r="6" fill="#7a4be0" />
    <path d="M7 13c3-3 7-3 9-1 1 2-4 2-5 4-2 0-3-1-4-3z" fill="#ffa436" />
  </svg>
);
const ChromeIcon = () => (
  <svg width="28" height="28" viewBox="0 0 28 28">
    <circle cx="14" cy="14" r="14" fill="#fbc116" />
    <path d="M14 14L1.900 7A14 14 0 0 1 26.100 7z" fill="#dd4b3e" /><path d="M14 7h12.100A14 14 0 0 1 14 28l6-10.500z" fill="#fbcd3c" />
    <path d="M1.900 7A14 14 0 0 0 14 28l6-10.500-6 3.500-6-3.500z" fill="#1da462" /><path d="M1.900 7L8 17.500 14 7z" fill="#dd4b3e" />
    <circle cx="14" cy="14" r="6.500" fill="#fff" /><circle cx="14" cy="14" r="5.200" fill="#4a8af4" />
  </svg>
);
const AcrobatIcon = () => (
  <svg width="28" height="27" viewBox="0 0 28 27">
    <rect width="28" height="27" fill="#d8d8d8" /><rect x="1" y="2" width="26" height="24" fill="#f3f1f0" /><rect width="26" height="2" fill="#b5121b" />
    <path d="M5 22c5-2 9-9 9-15 0-2-2-2-1.500 1 1 6 5 10 10.500 10 3 0 1-2-2-2-6 0-11 2-15 5-2 2 0 2-1 1z" fill="none" stroke="#d2232a" strokeWidth="1.200" />
  </svg>
);
const TaskViewIcon = () => (
  <svg width="20" height="20" viewBox="0 0 20 20" fill="none" stroke="#fff" strokeWidth="1.200">
    <path d="M1 0v3.500h12V0M1 6h12v8.500H1zM1 20v-3h12v3M18.500 0v4M18.500 11v9" /><rect x="17.500" y="6.500" width="2" height="2" fill="#fff" />
  </svg>
);

const TASKS: { n: string; icon: React.ReactNode; bar?: "full" | "part" | "stack" }[] = [
  { n: "Microsoft Edge", icon: <FaEdgeLegacy size={29} color="#0c7cd8" /> },
  { n: "File Explorer", icon: <ExplorerIcon />, bar: "full" },
  { n: "Mail", icon: <MailIcon /> },
  { n: "Firefox", icon: <FirefoxIcon />, bar: "part" },
  { n: "Word", icon: <WordIcon size={28} />, bar: "stack" },
  { n: "Chrome", icon: <ChromeIcon /> },
  { n: "Adobe Acrobat", icon: <AcrobatIcon /> },
  { n: "TeamViewer", icon: <TeamViewerIcon size={30} />, bar: "part" },
];

const TRAY: { n: string; icon: React.ReactNode }[] = [
  { n: "Show hidden icons", icon: <Chevron dir="up" size={20} color="#fff" width={1} /> },
  { n: "Symantec", icon: <SymantecIcon /> },
  { n: "Bluetooth", icon: <svg width="16" height="20" viewBox="0 0 16 20"><rect width="16" height="20" rx="7" fill="#0a84ff" /><path d="M4 6.500l8 7-4 3.500V3l4 3.500-8 7" fill="none" stroke="#fff" strokeWidth="1.300" /></svg> },
  { n: "OneDrive", icon: <CloudIcon grey /> },
  { n: "Satellite", icon: <svg width="20" height="19" viewBox="0 0 20 19"><ellipse cx="11" cy="9" rx="11" ry="5.500" transform="rotate(45 11 9)" fill="#111" stroke="#ddd" strokeWidth="1.200" /><path d="M9 10l-4 4" stroke="#ccc" strokeWidth="2" /><circle cx="8" cy="11" r="2.500" fill="#bbb" /><path d="M0 17l4-4 3 5z" fill="#ddd" /></svg> },
  { n: "Intel Graphics", icon: <svg width="20" height="20" viewBox="0 0 20 20"><rect x=".5" y=".5" width="19" height="19" rx="2" fill="#1793d8" stroke="#9cc9e6" /><path d="M0 12l8 8H1z" fill="#e9a23b" /><rect x="6" y="3" width="10" height="7" fill="none" stroke="#bfe3f7" /><path d="M3 7h7v6H3z" fill="#1178b8" stroke="#bfe3f7" /><ellipse cx="14" cy="15" rx="4.500" ry="3" fill="#5db7e8" stroke="#e6f5fc" /></svg> },
  { n: "Network", icon: <svg width="20" height="17" viewBox="0 0 20 17" fill="none" stroke="#fff" strokeWidth="1.200"><path d="M5 1.500h14.400v11H3V7M11 12.500v3.500M7.500 16h7M.6.6h4.200v4.500H.6zM2.700 5v11" /></svg> },
  { n: "Volume", icon: <svg width="21" height="18" viewBox="0 0 21 18" fill="none" stroke="#fff" strokeWidth="1.200"><path d="M.6 6h3l4-3.500v13L3.600 12h-3z" /><path d="M10 7c1.300 1 1.300 3 0 4" /><path d="M13 4.500c3 2.500 3 6.500 0 9" opacity=".6" /><path d="M16 2c4.500 4 4.500 10 0 14" opacity=".4" /></svg> },
];

const Taskbar = () => (
  <div className="flex h-[50px] shrink-0 bg-[#1c1c1c] text-white">
    <button aria-label="Start" className="flex w-[60px] items-center justify-center">
      <svg width="20" height="20" viewBox="0 0 20 20" fill="#fff"><path d="M0 2.700l8.300-1.200v8H0zM9.300 1.400L20 0v9.500H9.300zM0 10.500h8.300v8L0 17.300zM9.300 10.500H20V20L9.300 18.600z" /></svg>
    </button>
    <label className="flex w-[430px] items-center border border-[#c4c4c4] bg-[#f1f1f1] pl-3.5">
      <SearchGlyph size={20} color="#222" />
      <input aria-label="Type here to search" placeholder="Type here to search" className="ml-[15px] w-full bg-transparent text-[18px] outline-none placeholder:text-[#333]" />
    </label>
    <button aria-label="Cortana" className="flex w-[60px] items-center justify-center">
      <svg width="20" height="20" viewBox="0 0 20 20"><circle cx="10" cy="10" r="8.500" fill="none" stroke="#fff" strokeWidth="2.400" /></svg>
    </button>
    <button aria-label="Task View" className="flex w-[60px] items-center justify-center"><TaskViewIcon /></button>
    <div className="ml-[3px] flex flex-1">
      {TASKS.map((t) => (
        <button key={t.n} aria-label={t.n} className={`relative mr-px flex w-[61px] items-center justify-center ${t.bar === "full" ? "bg-[#4d4d4d]" : ""}`}>
          {t.icon}
          {t.bar === "full" && <span className="absolute inset-x-0 bottom-0 h-[3px] bg-[#a6d8ff]" />}
          {t.bar === "part" && <span className="absolute inset-x-[5px] bottom-0 h-[3px] bg-[#a6d8ff]" />}
          {t.bar === "stack" && (
            <span className="absolute inset-x-[5px] bottom-0 flex h-[3px]"><span className="flex-1 bg-[#a6d8ff]" /><span className="w-[11px] bg-[#7f9fb8]" /></span>
          )}
        </button>
      ))}
    </div>
    <div className="flex">
      {TRAY.map((t) => (
        <button key={t.n} aria-label={t.n} className="flex w-[30px] items-center justify-center">{t.icon}</button>
      ))}
    </div>
    <button className="flex w-[84px] flex-col items-center justify-center text-[14px] leading-[22px]">
      <span>4:06 PM</span>
      <span>7/12/2020</span>
    </button>
    <button aria-label="Notifications" className="ml-[2px] flex w-[46px] items-center justify-center">
      <svg width="20" height="20" viewBox="0 0 20 20" fill="none" stroke="#fff" strokeWidth="1.200"><path d="M.6.6h18.800v15.400h-6.400L10 18.800 7 16H.6z" /></svg>
    </button>
    <button aria-label="Show desktop" className="ml-3 w-1.5 border-l border-[#6d6d6d]" />
  </div>
);

export default function App() {
  return (
    <div className="relative flex h-screen flex-col overflow-hidden bg-white font-['Open_Sans','Noto_Sans',sans-serif]">
      <TitleBar />
      <Tabs />
      <Ribbon />
      <AddressBar />
      <main className="flex min-h-0 flex-1 overflow-hidden">
        <NavPane />
        <FileList />
        <div className="flex w-5 flex-col bg-[#f0f0f0]">
          <button aria-label="Scroll up" className="mr-px flex h-[21px] items-center justify-center"><Chevron dir="up" /></button>
          <div className="mr-px h-[22px] bg-[#cdcdcd]" />
          <div className="flex-1" />
          <button aria-label="Scroll down" className="mr-px flex h-[21px] items-center justify-center"><Chevron dir="down" /></button>
        </div>
      </main>
      <StatusBar />
      <Taskbar />
      <button aria-label="TeamViewer panel" className="absolute right-0 bottom-[113px] z-10 h-[65px] w-[31px]">
        <svg width="31" height="65" viewBox="0 0 31 65" className="absolute inset-0">
          <path d="M31 .5H4L.5 4v43l4 4L31 64.500z" fill="#fff" stroke="#c9ced6" />
          <path d="M.5 5V3.500L3.500.5" stroke="#333" fill="none" />
        </svg>
        <span className="absolute top-[7px] right-px"><TeamViewerIcon size={25} /></span>
      </button>
      <ContextMenu />
    </div>
  );
}
